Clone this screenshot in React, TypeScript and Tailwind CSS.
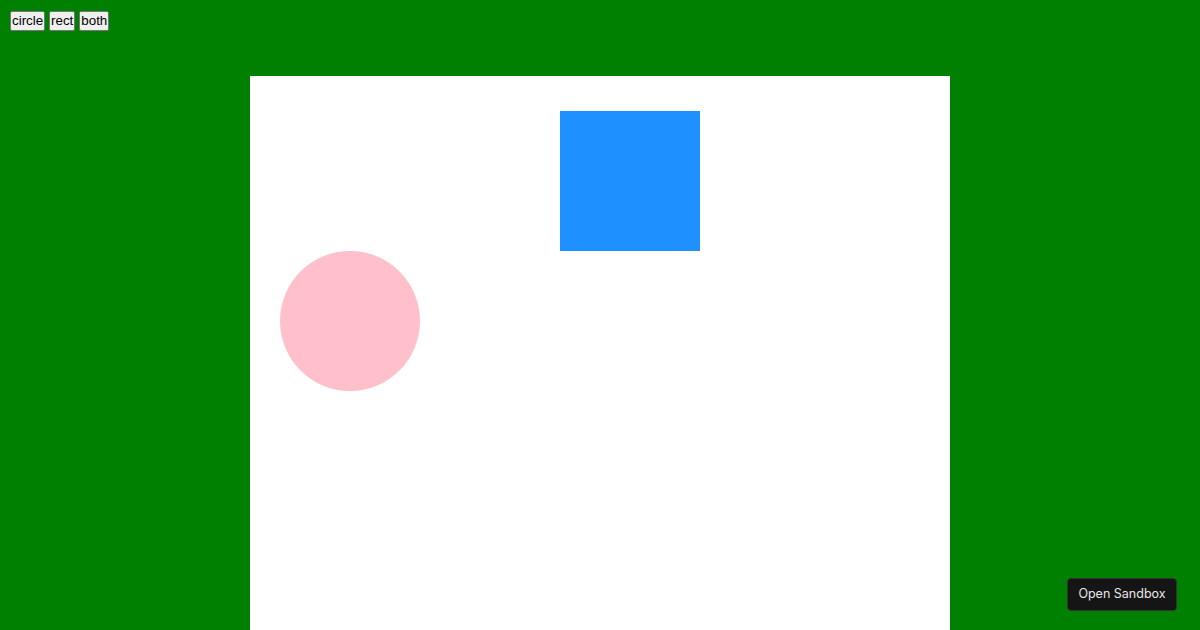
export default function App() {
  const btn =
    "h-[20px] px-[1px] text-[13.33px] leading-none text-black bg-[#efefef] border border-[#767676] rounded-[2px] font-['Liberation_Sans',Arial,sans-serif]";
  return (
    <div className="relative w-[1200px] h-[630px] overflow-hidden bg-[#008000]">
      <div className="flex gap-[4px] pl-[10px] pt-[11px]">
        <button className={btn}>circle</button>
        <button className={btn}>rect</button>
        <button className={`${btn} px-[0.5px]`}>both</button>
      </div>
      <div className="mx-auto mt-[45px] w-[700px] h-[600px] bg-white">
        <svg width="700" height="600" viewBox="0 0 700 600">
          <rect x="310" y="35" width="140" height="140" fill="#1e90ff" />
          <circle cx="100" cy="245" r="70" fill="#ffc0cb" />
        </svg>
      </div>
      <button className="absolute left-[1067px] top-[578px] w-[110px] h-[33px] rounded-[4px] bg-[#151515] border border-[#333] text-[12.5px] text-[#e8e8e8] font-['Inter',sans-serif]">
        Open Sandbox
      </button>
    </div>
  );
}
